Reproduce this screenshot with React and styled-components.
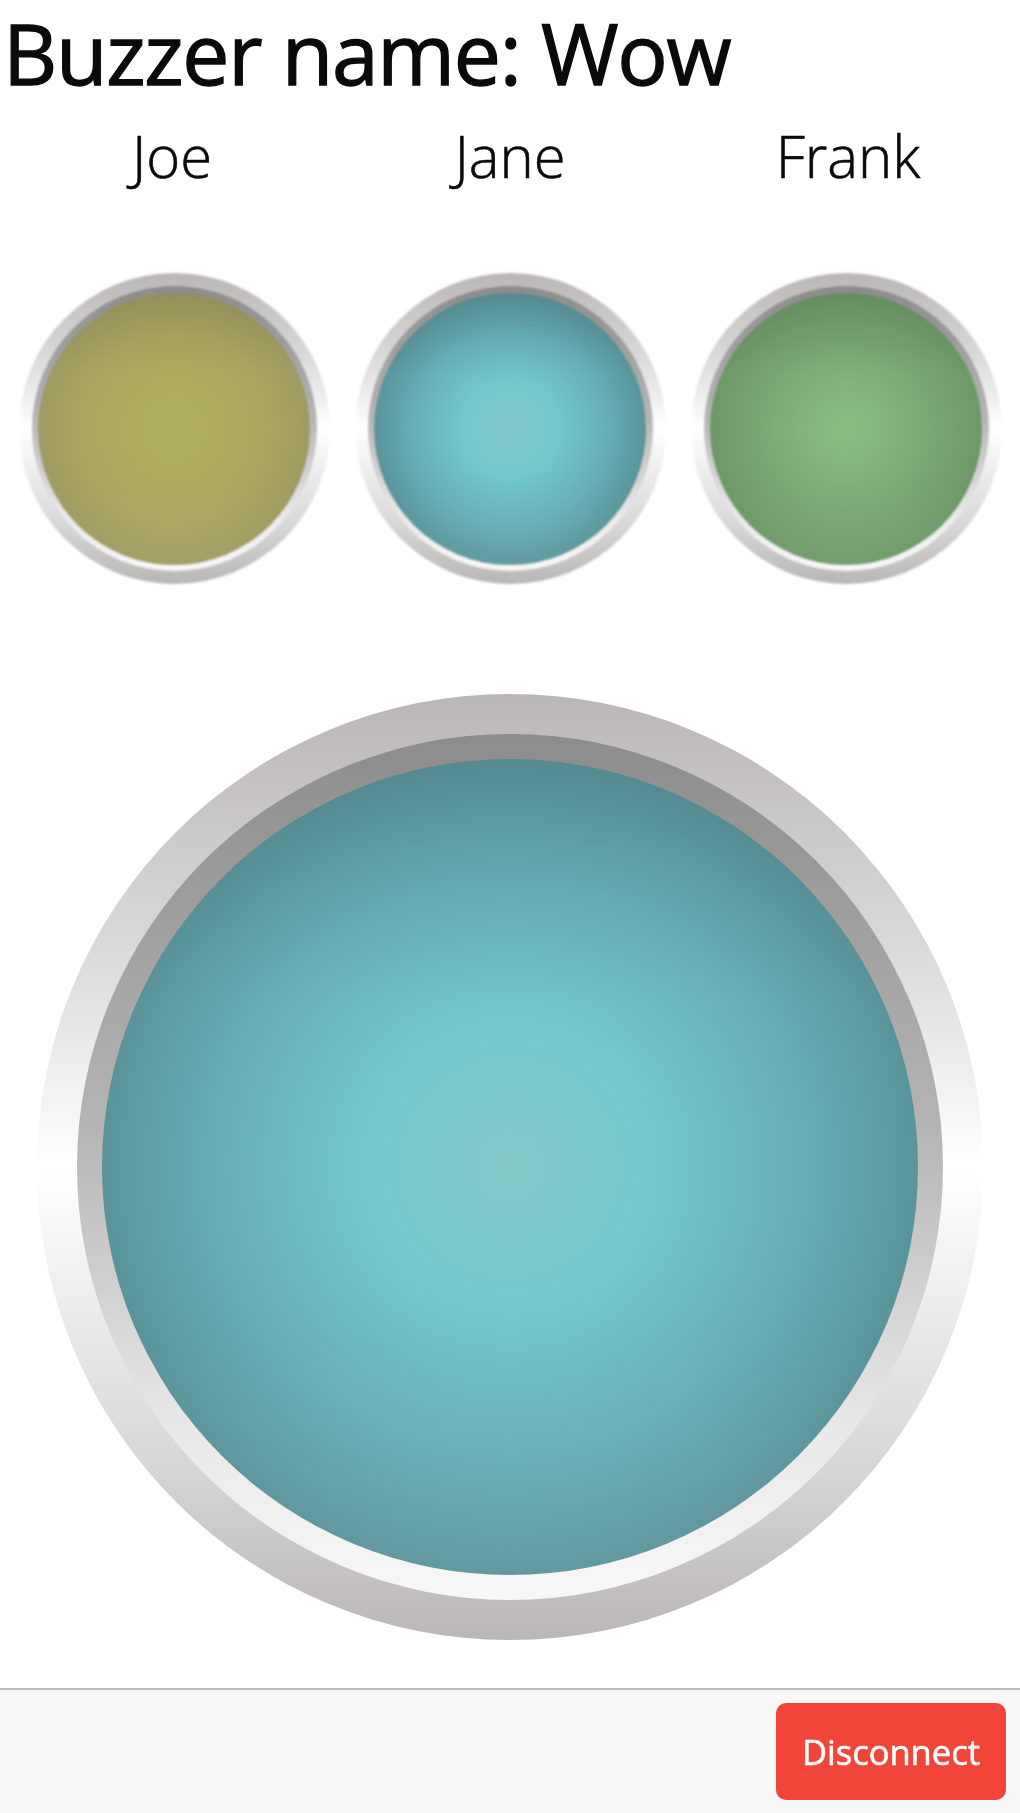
import React from "react";
import styled, { createGlobalStyle } from "styled-components";

const Global = createGlobalStyle`
  html, body { margin: 0; padding: 0; background: #fff; }
  body { font-family: "Open Sans", "Noto Sans", sans-serif; color: #000; }
`;

const Page = styled.div`
  width: 1020px;
  height: 1813px;
  display: flex;
  flex-direction: column;
  overflow: hidden;
`;

const Title = styled.h1`
  margin: 0;
  padding: 0 0 8px 3px;
  font-size: 84px;
  line-height: 106px;
  font-weight: 500;
  letter-spacing: -1.3px;
  -webkit-text-stroke: 1.3px #0a0a0a;
  color: #0a0a0a;
  white-space: nowrap;
  filter: blur(0.5px);
`;

const NameRow = styled.div`
  display: grid;
  grid-template-columns: repeat(3, 1fr);
  padding: 0 3px 77px;
`;

const Name = styled.div`
  text-align: center;
  font-size: 58px;
  line-height: 84px;
  font-weight: 300;
  -webkit-text-stroke: 0.6px #0a0a0a;
  color: #0a0a0a;
  filter: blur(0.4px);
`;

const SmallRow = styled.div`
  display: flex;
  justify-content: center;
  gap: 25px;
  margin-top: -2px;
`;

const Ring = styled.div`
  box-sizing: border-box;
  flex: none;
  width: ${(p) => p.$size}px;
  height: ${(p) => p.$size}px;
  padding: ${(p) => p.$rim}px;
  border-radius: 50%;
  background: linear-gradient(180deg, #bab6b6 0%, #d8d6d6 25%, #ffffff 50%, #dcdbdb 78%, #bab6b6 100%);
  filter: blur(${(p) => p.$soft}px);
`;

const Bezel = styled.div`
  box-sizing: border-box;
  width: 100%;
  height: 100%;
  padding: ${(p) => p.$lip}px;
  border-radius: 50%;
  background: linear-gradient(180deg, #8c8c8c 0%, #b4b4b4 45%, #e8e8e8 80%, #f8f8f8 100%);
`;

const Face = styled.div`
  width: 100%;
  height: 100%;
  border-radius: 50%;
  background:
    linear-gradient(180deg, rgba(0, 0, 0, 0.07) 0%, rgba(0, 0, 0, 0) 30%, rgba(255, 255, 255, 0) 70%, rgba(255, 255, 255, 0.05) 100%),
    radial-gradient(
      circle closest-side,
      ${(p) => p.$tone.c} 0%,
      ${(p) => p.$tone.m} 35%,
      ${(p) => p.$tone.o} 70%,
      ${(p) => p.$tone.e} 100%
    );
`;

const BigRow = styled.div`
  display: flex;
  justify-content: center;
  margin-top: 110px;
`;

const Footer = styled.footer`
  box-sizing: border-box;
  margin-top: auto;
  height: 125px;
  padding: 13px 14px 14px;
  display: flex;
  justify-content: flex-end;
  background: #f8f8f8;
  border-top: 2px solid #bdbdbd;
`;

const Disconnect = styled.button`
  width: 230px;
  height: 97px;
  border: 0;
  border-radius: 10px;
  background: #f2453a;
  color: #fff;
  font-family: inherit;
  font-size: 34.5px;
  font-weight: 400;
  -webkit-text-stroke: 0.6px #fff;
  padding: 0;
  filter: blur(0.3px);
`;

const TONES = {
  olive: { c: "#b0b260", m: "#b0ac5e", o: "#aaa560", e: "#9e9a61" },
  teal: { c: "#82c6c7", m: "#72c9ca", o: "#67afb6", e: "#5a949b" },
  green: { c: "#8abf82", m: "#80b47a", o: "#75a56e", e: "#6c9866" },
};

function Buzzer({ size, rim, lip, soft = 0, tone }) {
  return (
    <Ring $size={size} $rim={rim} $soft={soft}>
      <Bezel $lip={lip}>
        <Face $tone={TONES[tone]} />
      </Bezel>
    </Ring>
  );
}

export default function App() {
  return (
    <Page>
      <Global />
      <Title>Buzzer name: Wow</Title>
      <NameRow>
        <Name>Joe</Name>
        <Name>Jane</Name>
        <Name>Frank</Name>
      </NameRow>
      <SmallRow>
        <Buzzer size={311} rim={13} lip={6.5} soft={0.8} tone="olive" />
        <Buzzer size={311} rim={13} lip={6.5} soft={0.8} tone="teal" />
        <Buzzer size={311} rim={13} lip={6.5} soft={0.8} tone="green" />
      </SmallRow>
      <BigRow>
        <Buzzer size={946} rim={40} lip={25} tone="teal" />
      </BigRow>
      <Footer>
        <Disconnect>Disconnect</Disconnect>
      </Footer>
    </Page>
  );
}
